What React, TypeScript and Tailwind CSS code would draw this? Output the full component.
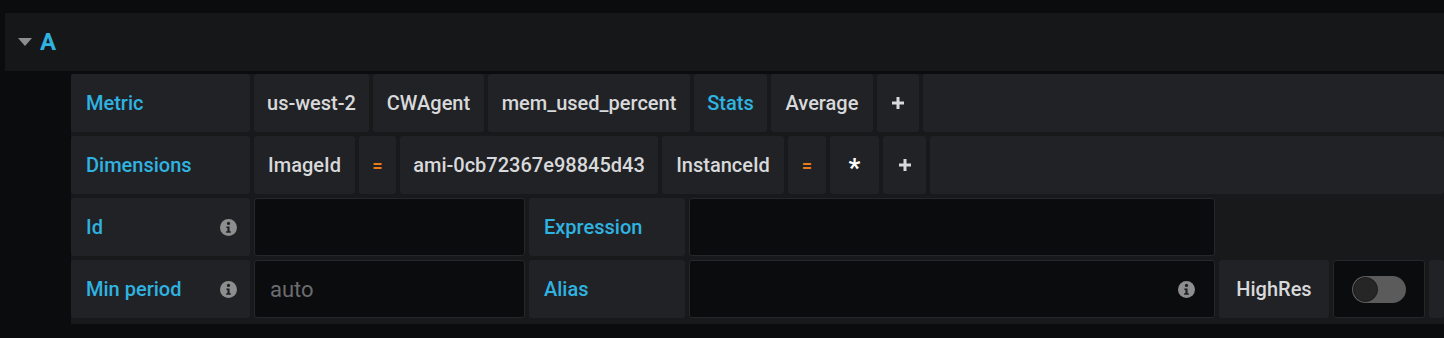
import React from 'react';

const font = { fontFamily: 'Roboto, "Liberation Sans", sans-serif' };

const Cell: React.FC<{ w?: string; className?: string; children?: React.ReactNode }> = ({ w = '', className = '', children }) => (
  <div className={`h-[58px] shrink-0 rounded-[3px] bg-[#212226] flex items-center ${w} ${className}`}>{children}</div>
);

const Label: React.FC<{ w: string; text: string; info?: boolean }> = ({ w, text, info }) => (
  <Cell w={w} className="pl-[15px] pr-[13px] justify-between">
    <span className="text-[#2fb3e0] text-[20px] font-medium">{text}</span>
    {info && <InfoIcon />}
  </Cell>
);

const Value: React.FC<{ w: string; text: string }> = ({ w, text }) => (
  <Cell w={w} className="justify-center">
    <span className="text-[#d8d9da] text-[20px] font-medium">{text}</span>
  </Cell>
);

const Op: React.FC<{ w: string }> = ({ w }) => (
  <Cell w={w} className="justify-center">
    <span className="text-[#eb7b18] text-[18px] font-bold">=</span>
  </Cell>
);

const Plus: React.FC<{ w: string }> = ({ w }) => (
  <Cell w={w} className="justify-center bg-[#2a2b2f]">
    <svg width="16" height="16" viewBox="0 0 16 16">
      <path d="M8 2v12M2 8h12" stroke="#d8d9da" strokeWidth="3" />
    </svg>
  </Cell>
);

const InfoIcon = () => (
  <svg width="17" height="17" viewBox="0 0 16 16">
    <circle cx="8" cy="8" r="8" fill="#8e8e8e" />
    <circle cx="8" cy="4.2" r="1.5" fill="#1e1f22" />
    <path d="M6 7h3v4.6h1.2V13H5.8v-1.4H7V8.4H6z" fill="#1e1f22" />
  </svg>
);

const Input: React.FC<{ w: string; children?: React.ReactNode; className?: string }> = ({ w, children, className = '' }) => (
  <div className={`h-[58px] shrink-0 rounded-[3px] bg-[#0b0c0e] border border-[#26272a] flex items-center ${w} ${className}`}>{children}</div>
);

export default function App() {
  return (
    <div className="w-[1444px] h-[338px] bg-[#0b0c0e] overflow-hidden pt-[13px] pl-[5px]" style={font}>
      <div className="h-[58px] bg-[#161719] flex items-center pl-[13px]">
        <svg width="14" height="8" viewBox="0 0 14 8" className="mr-[8px]">
          <path d="M0 0h14L7 8z" fill="#8e8e8e" />
        </svg>
        <span className="text-[#2fb3e0] text-[24px] font-bold leading-none">A</span>
      </div>
      <div className="mt-[3px] ml-[66px] bg-[#18191b] flex flex-col gap-1 pb-[6px]">
        <div className="flex gap-1">
          <Label w="w-[179px]" text="Metric" />
          <Value w="w-[115px]" text="us-west-2" />
          <Value w="w-[111px]" text="CWAgent" />
          <Value w="w-[202px]" text="mem_used_percent" />
          <Cell w="w-[73px]" className="justify-center">
            <span className="text-[#2fb3e0] text-[20px] font-medium">Stats</span>
          </Cell>
          <Value w="w-[102px]" text="Average" />
          <Plus w="w-[42px]" />
          <Cell className="flex-1" />
        </div>
        <div className="flex gap-1">
          <Label w="w-[179px]" text="Dimensions" />
          <Value w="w-[101px]" text="ImageId" />
          <Op w="w-[37px]" />
          <Value w="w-[258px]" text="ami-0cb72367e98845d43" />
          <Value w="w-[122px]" text="InstanceId" />
          <Op w="w-[38px]" />
          <Cell w="w-[49px]" className="justify-center">
            <span className="text-white text-[26px] font-bold leading-none mt-[6px]">*</span>
          </Cell>
          <Plus w="w-[43px]" />
          <Cell className="flex-1" />
        </div>
        <div className="flex gap-1">
          <Label w="w-[179px]" text="Id" info />
          <Input w="w-[271px]" />
          <Label w="w-[156px]" text="Expression" />
          <Input w="w-[526px]" />
        </div>
        <div className="flex gap-1">
          <Label w="w-[179px]" text="Min period" info />
          <Input w="w-[271px]" className="pl-[15px]">
            <span className="text-[#6b6c6e] text-[22px]">auto</span>
          </Input>
          <Label w="w-[156px]" text="Alias" />
          <Input w="w-[526px]" className="justify-end pr-[19px]">
            <InfoIcon />
          </Input>
          <Value w="w-[110px]" text="HighRes" />
          <Input w="w-[92px]" className="justify-center">
            <div className="w-[54px] h-[27px] rounded-full bg-[#5b5b5b] flex items-center pl-[1px]">
              <div className="w-[25px] h-[25px] rounded-full bg-[#262626] border border-[#1b1b1b]" />
            </div>
          </Input>
          <Cell className="flex-1" />
        </div>
      </div>
    </div>
  );
}
